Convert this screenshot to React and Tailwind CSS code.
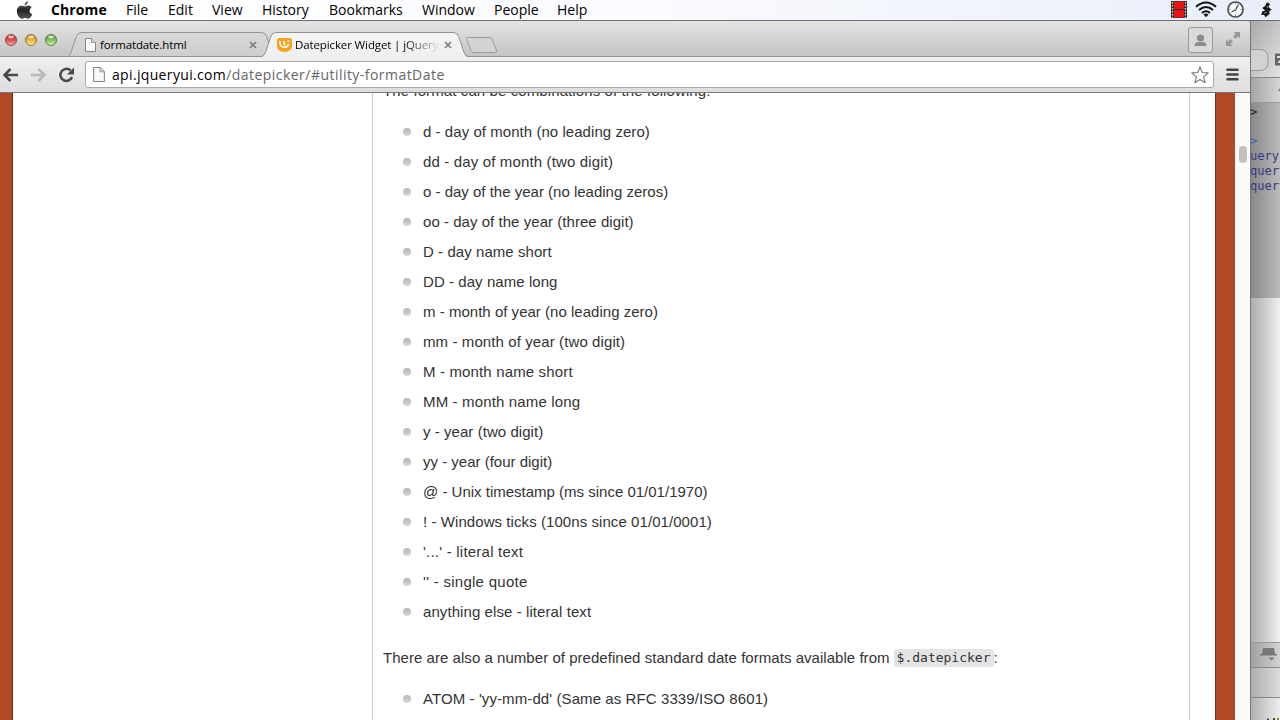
const menuItems = [
  ['File', 'w-[23px]'],
  ['Edit', 'w-[25px]'],
  ['View', 'w-[31px]'],
  ['History', 'w-[48px]'],
  ['Bookmarks', 'w-[74px]'],
  ['Window', 'w-[53px]'],
  ['People', 'w-[44px]'],
  ['Help', 'w-[31px]'],
];

const formats = [
  ['d - day of month (no leading zero)', 'tracking-[0.05px]'],
  ['dd - day of month (two digit)', 'tracking-[0.15px]'],
  ['o - day of the year (no leading zeros)', 'tracking-normal'],
  ['oo - day of the year (three digit)', 'tracking-[0.04px]'],
  ['D - day name short', 'tracking-[0.06px]'],
  ['DD - day name long', 'tracking-[0.06px]'],
  ['m - month of year (no leading zero)', 'tracking-[0.02px]'],
  ['mm - month of year (two digit)', 'tracking-[0.1px]'],
  ['M - month name short', 'tracking-[0.15px]'],
  ['MM - month name long', 'tracking-[0.15px]'],
  ['y - year (two digit)', 'tracking-[0.05px]'],
  ['yy - year (four digit)', 'tracking-normal'],
  ['@ - Unix timestamp (ms since 01/01/1970)', 'tracking-normal'],
  ['! - Windows ticks (100ns since 01/01/0001)', 'tracking-[0.07px]'],
  ["'...' - literal text", 'tracking-[0.22px]'],
  ["'' - single quote", 'tracking-[0.27px]'],
  ['anything else - literal text', 'tracking-[0.08px]'],
];

function AppleLogo() {
  return (
    <svg className="ml-[16px] h-[19px] w-[17px] shrink-0" viewBox="0 0 17 19">
      <defs>
        <linearGradient id="apple" x1="0" y1="0" x2="0" y2="1">
          <stop offset="0" stopColor="#777" />
          <stop offset=".5" stopColor="#222" />
          <stop offset="1" stopColor="#555" />
        </linearGradient>
      </defs>
      <path fill="url(#apple)" d="M8.6 4.4C8.4 2.2 10 .4 12 0c.2 2.2-1.5 4.2-3.4 4.4zM8.8 5.5c.9 0 1.800-.9 3.400-.9 1.300 0 2.600.6 3.400 1.800-2.900 1.700-2.500 5.600.7 6.700-.8 2.200-2.200 4.700-3.900 4.700-1.300 0-1.800-.8-3.300-.8s-2 .8-3.300.8C3.500 17.800.9 14 .9 10.300c0-3.600 2.200-5.500 4.500-5.500 1.400 0 2.500.7 3.400.7z" />
    </svg>
  );
}

function MenuBar() {
  return (
    <header className="flex h-5 shrink-0 items-center bg-gradient-to-r from-white via-[#fafbfe] to-[#e9eefa] font-['Open_Sans','Noto_Sans',sans-serif] text-[14px] leading-5 text-black">
      <AppleLogo />
      <div className="ml-[18px] flex gap-[19px] whitespace-nowrap">
        <span className="w-[56px] font-bold tracking-[0.1px]">Chrome</span>
        {menuItems.map(([name, width]) => (
          <span key={name} className={width}>{name}</span>
        ))}
      </div>
      <svg className="ml-auto h-5 w-[110px]" viewBox="1170 0 110 20">
        <path d="M1171 1h16v17h-16z" fill="#3a2a2a" />
        <path d="M1174 1.500h10v7.500h-10zM1174 10h10v7.500h-10z" fill="#e81414" />
        <path d="M1172.500 2v16M1185.500 2v16" stroke="#ddd" strokeWidth="1.300" strokeDasharray="1.500 1.500" />
        <g fill="none" stroke="#111" strokeWidth="2">
          <path d="M1196 6.800q10-8.500 20 0" />
          <path d="M1199 10q7-6 14 0" />
          <path d="M1202 13q4-3.500 8 0" />
        </g>
        <path d="M1203.500 14.500q2.500-1.800 5 0l-2.500 2.700z" fill="#111" />
        <circle cx="1235.500" cy="9.500" r="7.500" fill="#fff" stroke="#4a4d52" strokeWidth="1.700" />
        <path d="M1238.500 4.500l-3 5.500-4 2" fill="none" stroke="#444" strokeWidth="1.300" />
        <path d="M1235.500 3v1.500M1235.500 14.500V16M1229 9.500h1.500M1240.500 9.500h1.500" stroke="#777" strokeWidth=".8" />
        <path d="M1267 2.200l3 1.800-1.500 3 3 2.500-2.500 2.200.8 2-4.300 3.500-1.500-2.400-2.800.2 1-3.500 3-1-3-2.500 2.800-2z" fill="#181818" />
        <path d="M1266.500 6.500l1.500 1M1264.500 13l2-.5" stroke="#ddd" strokeWidth=".8" />
      </svg>
    </header>
  );
}

function PageIcon({ className }) {
  return (
    <svg className={className} viewBox="0 0 11 14">
      <path d="M.5.5h6l4 4v9H.500z" fill="#f8f8f8" stroke="#858585" />
      <path d="M6.500.5v4h4" fill="#ddd" stroke="#959595" />
    </svg>
  );
}

function CloseIcon({ className }) {
  return (
    <svg className={className} viewBox="0 0 8 8">
      <path d="M1 1l6 6M7 1L1 7" stroke="#777" strokeWidth="1.500" />
    </svg>
  );
}

function TrafficLights() {
  return (
    <svg className="relative h-[35px] w-[62px] shrink-0" viewBox="0 21 62 35">
      <defs>
        <linearGradient id="red" x1="0" y1="0" x2="0" y2="1"><stop stopColor="#b52f2f" /><stop offset=".5" stopColor="#e14b4b" /><stop offset="1" stopColor="#ffb0a8" /></linearGradient>
        <linearGradient id="yellow" x1="0" y1="0" x2="0" y2="1"><stop stopColor="#bd7a20" /><stop offset=".5" stopColor="#eeb040" /><stop offset="1" stopColor="#fff09a" /></linearGradient>
        <linearGradient id="green" x1="0" y1="0" x2="0" y2="1"><stop stopColor="#4c8530" /><stop offset=".5" stopColor="#82c063" /><stop offset="1" stopColor="#d6f9a8" /></linearGradient>
      </defs>
      <circle cx="11" cy="40" r="5.500" fill="url(#red)" stroke="#8c4743" />
      <circle cx="31" cy="40" r="5.500" fill="url(#yellow)" stroke="#94713d" />
      <circle cx="51" cy="40" r="5.500" fill="url(#green)" stroke="#587d49" />
      <g fill="#fff" opacity=".7">
        <ellipse cx="11" cy="37" rx="2.800" ry="1.400" />
        <ellipse cx="31" cy="37" rx="2.800" ry="1.400" />
        <ellipse cx="51" cy="37" rx="2.800" ry="1.400" />
      </g>
    </svg>
  );
}

function TabStrip() {
  return (
    <div className="relative flex h-9 shrink-0 bg-gradient-to-b from-[#e4e4e4] to-[#c3c3c3] font-['Open_Sans','Noto_Sans',sans-serif] text-[11.5px] text-black">
      <svg className="absolute left-0 top-0 h-9 w-[1250px]" viewBox="0 21 1250 36">
        <defs>
          <linearGradient id="idleTab" x1="0" y1="0" x2="0" y2="1"><stop stopColor="#d9d9d9" /><stop offset="1" stopColor="#cdcdcd" /></linearGradient>
          <linearGradient id="activeTab" x1="0" y1="0" x2="0" y2="1"><stop stopColor="#f5f5f5" /><stop offset="1" stopColor="#efefef" /></linearGradient>
        </defs>
        <path d="M0 56.500H1250" stroke="#939393" />
        <path d="M68 56.500q2-1 3-4l5-15q1.500-5 5-5H262q3.500 0 5 5l5 15q1 3 3 4z" fill="url(#idleTab)" stroke="#949494" />
        <path d="M262 57q2-1 3.500-4.500l5-15q1.500-5 5-5H454q3.500 0 5 5l5 15q1.500 4 4 4.500z" fill="url(#activeTab)" />
        <path d="M262 56.500q2-1 3.500-4l5-15q1.500-5 5-5H454q3.500 0 5 5l5 15q1.500 4 4 4" fill="none" stroke="#919191" />
        <path d="M467.500 37.500H489q2.500 0 3.500 2.500l4 10.500q.8 2-1.500 2H474q-2 0-3-2l-4.500-11q-.5-2 1-2z" fill="#d3d3d3" stroke="#9b9b9b" />
      </svg>
      <TrafficLights />
      <div className="relative ml-[23px] flex h-[35px] w-[173px] items-center pt-[13px]">
        <PageIcon className="h-[14px] w-[11px] shrink-0" />
        <span className="ml-1 w-[148px] tracking-[-0.12px]">formatdate.html</span>
        <CloseIcon className="ml-px h-2 w-2 shrink-0" />
      </div>
      <div className="relative ml-[19px] flex h-[35px] w-[177px] items-center pt-[13px]">
        <svg className="h-[14px] w-[15px] shrink-0" viewBox="0 0 15 14">
          <path d="M2.500 0h10Q15 0 15 3v4q0 7-7.500 7Q0 14 0 7V3q0-3 2.500-3z" fill="#f9a11b" />
          <path d="M3 3v2c.5 5.500 8 5.500 8.500.8M7 3v2.500q.3 1.200 1.500 1M10.300 3h2.200" fill="none" stroke="#fff" strokeWidth="1.700" />
        </svg>
        <span className="ml-[3px] w-[144px] overflow-hidden whitespace-nowrap tracking-[-0.12px] [mask-image:linear-gradient(to_right,black_108px,transparent_146px)]">Datepicker Widget | jQuery</span>
        <CloseIcon className="ml-[5px] h-2 w-2 shrink-0" />
      </div>
      <div className="relative ml-auto flex h-[35px] items-center gap-[11px] pr-[9px]">
        <svg className="mt-[3px] h-[26px] w-[27px]" viewBox="0 0 27 26">
          <rect x="1.500" y=".5" width="24" height="25" rx="2.500" fill="#dadada" stroke="#999" />
          <circle cx="13.500" cy="11" r="3.600" fill="#8c8c8c" />
          <path d="M7.500 19q0-4 4-4h4q4 0 4 4z" fill="#8c8c8c" />
        </svg>
        <svg className="h-[16px] w-[16px]" viewBox="0 0 16 16">
          <path d="M8.500 1H15v6.500l-2-2L10.500 8 8 5.500 10.500 3zM1 8.500l2 2L5.500 8 8 10.500 5.500 13l2 2H1z" fill="#999" />
        </svg>
      </div>
    </div>
  );
}

function Toolbar() {
  return (
    <div className="flex h-9 shrink-0 items-center border-b border-[#777] bg-gradient-to-b from-[#efefef] to-[#dedede] font-['Open_Sans','Noto_Sans',sans-serif]">
      <svg className="h-9 w-[85px] shrink-0" viewBox="0 57 85 36">
        <g fill="none" strokeWidth="2.500">
          <path d="M18 75H5M10.500 69l-6 6 6 6" stroke="#484848" />
          <path d="M31 75h13M38.500 69l6 6-6 6" stroke="#b9b9b9" />
          <path d="M70.500 70.500a6 6 0 1 0 1.500 6.500" stroke="#484848" />
        </g>
        <path d="M74 67.500v7h-7z" fill="#484848" />
      </svg>
      <div className="flex h-[27px] w-[1129px] items-center rounded-[3px] border border-[#a9a9a9] bg-white pl-[7px] pr-1">
        <PageIcon className="h-[15px] w-[12px] shrink-0" />
        <span className="ml-[7px] whitespace-nowrap text-[14px] leading-5 tracking-[0.46px] text-[#666]">
          <span className="tracking-[0.34px] text-black">api.jqueryui.com</span>/datepicker/#utility-formatDate
        </span>
        <svg className="ml-auto h-[18px] w-[18px]" viewBox="0 0 18 18">
          <path d="M9 .9l2.200 5.600 6 .4-4.600 3.900 1.500 5.900L9 13.500l-5.100 3.200 1.500-5.900L.8 6.900l6-.4z" fill="#fff" stroke="#777" strokeWidth="1.100" strokeLinejoin="round" />
        </svg>
      </div>
      <svg className="ml-3 h-[13px] w-[13px]" viewBox="0 0 13 13">
        <path d="M1.500 1.700h10M1.500 6.500h10M1.500 11.300h10" stroke="#444" strokeWidth="2.600" strokeLinecap="round" />
      </svg>
    </div>
  );
}

function Bullet({ children, className }) {
  return (
    <li className="flex h-[30px] items-center">
      <span className="mb-px mr-[12px] size-[8px] shrink-0 rounded-full bg-gradient-to-b from-[#b5b5b5] to-[#d8d8d8]" />
      <span className={className}>{children}</span>
    </li>
  );
}

function Page() {
  return (
    <div className="flex min-h-0 flex-1 overflow-hidden bg-[#b24926]">
      <div className="ml-3 flex w-[1204px] border-x border-[#6d3020] bg-white pl-[359px] pr-[25px]">
        <article className="flex-1 border-x border-[#c9c9c9] pl-[10px] font-['Liberation_Sans',Arial,sans-serif] text-[15px] text-[#333]">
          <p className="-mt-[14px] h-6 leading-6 tracking-[0.1px]">The format can be combinations of the following:</p>
          <ul className="mt-[14px] pl-[20px]">
            {formats.map(([text, tracking]) => <Bullet key={text} className={tracking}>{text}</Bullet>)}
          </ul>
          <p className="mt-[19px] flex h-6 items-center whitespace-nowrap">
            <span className="tracking-[0.04px]">There are also a number of predefined standard date formats available from</span>
            <code className="ml-1 rounded-[3px] bg-[#e4e4e4] px-[3px] font-['DejaVu_Sans_Mono',monospace] text-[13px] leading-[18px]">$.datepicker</code>:
          </p>
          <ul className="mt-[14px] pl-[20px]">
            <Bullet className="tracking-[0.09px]">ATOM - 'yy-mm-dd' (Same as RFC 3339/ISO 8601)</Bullet>
          </ul>
        </article>
      </div>
      <div className="w-[19px]" />
      <div className="w-[15px] bg-[#fafafa] pl-[4px] pt-[53px]">
        <div className="h-[17px] w-2 rounded-full bg-[#c1c1c1]" />
      </div>
    </div>
  );
}

function BackgroundWindow() {
  return (
    <aside className="flex w-[30px] shrink-0 flex-col overflow-hidden border-l border-[#777] bg-[#ccc] font-['DejaVu_Sans_Mono',monospace] text-[12px]">
      <div className="h-[57px] shrink-0 border-b border-[#888] bg-gradient-to-br from-[#aaa] to-[#e2e2e2] pt-[28px]">
        <svg className="h-[23px] w-[29px]" viewBox="0 0 29 23">
          <path d="M-5 .5h13q9 0 9 8v5q0 8-9 8H-5" fill="#d2d2d2" stroke="#999" />
          <path d="M24 4.500h6v12h-6z" fill="#666" />
          <path d="M26 7h4v2h-4zM26.500 14l2-3H30v3z" fill="#ddd" />
          <path d="M27.500-16h3v7h-3z" fill="#aaa" />
        </svg>
      </div>
      <div className="h-[25px] shrink-0 border-b border-[#999] bg-gradient-to-r from-[#a5a5a5] to-[#d6d6d6]">
        <svg className="h-[24px] w-[29px]" viewBox="0 0 29 24"><path d="M27 13l2-3v3z" fill="#777" /></svg>
      </div>
      <div className="h-[195px] shrink-0 bg-gradient-to-r from-[#888] to-[#bcbcbc] pt-px leading-[15px] text-[#393984]">
        <div className="-ml-px h-[30px] pt-px text-[#222]">&gt;</div>
        <div className="-ml-px text-[#3261b5]">&gt;</div>
        <div className="-ml-px">uery-</div>
        <div className="-ml-px">query</div>
        <div className="-ml-px">query</div>
      </div>
      <div className="h-[345px] shrink-0 border-b border-[#999] bg-gradient-to-r from-[#adadad] to-[#f0f0f0]" />
      <div className="h-[25px] shrink-0 border-b border-[#888] bg-gradient-to-r from-[#a1a1a1] to-[#d2d2d2]">
        <svg className="h-[24px] w-[29px]" viewBox="0 0 29 24">
          <path d="M12 5h11l1 6h2v1.500H9V11h2zM17.500 14.500h6l-3 3z" fill="#777" />
        </svg>
      </div>
      <div className="h-[30px] shrink-0 border-b border-[#888] bg-gradient-to-r from-[#adadad] to-[#ddd]" />
      <div className="flex-1 bg-gradient-to-r from-[#b1b1b1] to-[#eee]">
        <svg className="h-[22px] w-[29px]" viewBox="0 0 29 22"><path d="M16 20.500h2v1.500h-2zM22 20h2v2h-2z" fill="#444" /><path d="M26 20h2v2h-2z" fill="#6a9a3a" /></svg>
      </div>
    </aside>
  );
}

export default function App() {
  return (
    <div className="flex h-[720px] w-[1280px] flex-col overflow-hidden bg-white">
      <MenuBar />
      <div className="flex min-h-0 flex-1 border-t border-[#6f6f6f] bg-[#bbb]">
        <main className="flex w-[1250px] shrink-0 flex-col overflow-hidden rounded-tr-[4px]">
          <TabStrip />
          <Toolbar />
          <Page />
        </main>
        <BackgroundWindow />
      </div>
    </div>
  );
}
